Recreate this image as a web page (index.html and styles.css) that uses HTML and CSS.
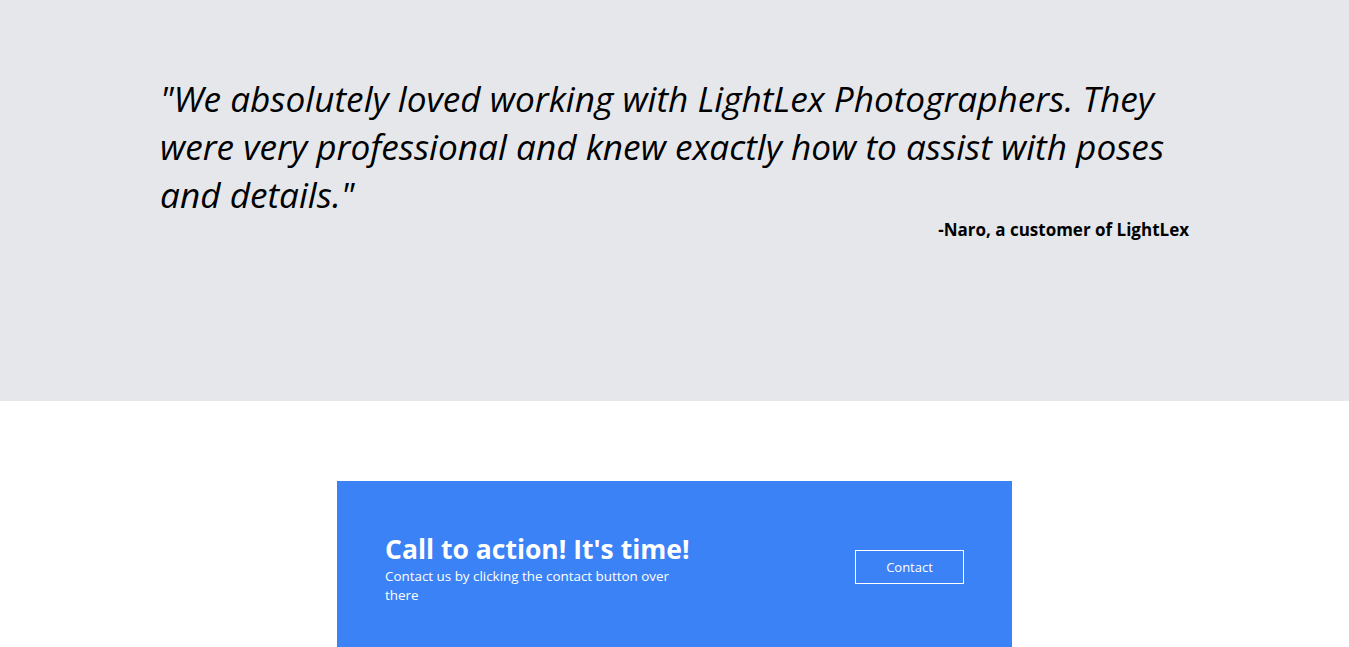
FILE: index.html
```html
<!DOCTYPE html>
<html lang="en">
<head>
<meta charset="utf-8">
<title>LightLex</title>
<link rel="stylesheet" href="styles.css">
</head>
<body>
<section class="testimonial">
  <div class="testimonial-inner">
    <blockquote class="quote">"We absolutely loved working with LightLex Photographers. They were very professional and knew exactly how to assist with poses and details."</blockquote>
    <p class="author">-Naro, a customer of LightLex</p>
  </div>
</section>
<section class="cta-section">
  <div class="cta">
    <div class="cta-text">
      <h2 class="cta-title">Call to action! It's time!</h2>
      <p class="cta-desc">Contact us by clicking the contact button over there</p>
    </div>
    <a class="cta-button" href="#">Contact</a>
  </div>
</section>
</body>
</html>
```
FILE: styles.css
```css
* { box-sizing: border-box; }
html, body { margin: 0; padding: 0; }
body {
  font-family: "Open Sans", "Noto Sans", sans-serif;
  color: #000;
  background: #fff;
}
.testimonial {
  background: #e5e7eb;
  height: 401px;
  padding-top: 74px;
}
.testimonial-inner {
  width: 1029px;
  margin: 0 auto;
}
.quote {
  margin: 0;
  font-style: italic;
  font-size: 35.2px;
  line-height: 48px;
  font-weight: 400;
}
.author {
  margin: 2px 0 0;
  text-align: right;
  font-weight: 700;
  font-size: 17px;
  line-height: 20px;
}
.cta-section {
  padding-top: 80px;
}
.cta {
  width: 675px;
  margin: 0 auto;
  background: #3b82f6;
  color: #fff;
  padding: 52px 48px 44px;
  display: flex;
  align-items: center;
  justify-content: space-between;
}
.cta-title {
  margin: 0;
  font-size: 26.5px;
  line-height: 32px;
  font-weight: 700;
}
.cta-desc {
  margin: 2px 0 0;
  font-size: 13.4px;
  line-height: 19px;
  width: 300px;
}
.cta-button {
  display: inline-flex;
  align-items: center;
  justify-content: center;
  width: 109px;
  height: 34px;
  border: 1px solid #fff;
  color: #fff;
  text-decoration: none;
  font-size: 13px;
  margin-top: -4px;
}
```
